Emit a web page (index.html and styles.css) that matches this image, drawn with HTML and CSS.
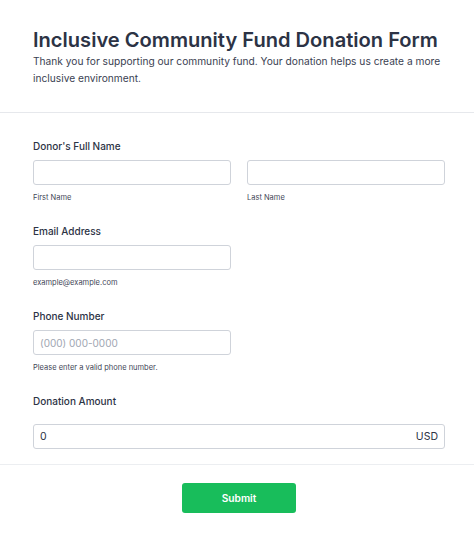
FILE: index.html
```html
<!DOCTYPE html>
<html lang="en">
<head>
    <meta charset="UTF-8">
    <meta name="viewport" content="width=device-width, initial-scale=1.0">
    <title>Inclusive Community Fund Donation Form</title>
    <link rel="stylesheet" href="styles.css">
</head>
<body>
    <form class="form-card">
        <div class="form-header">
            <h1 class="form-title">Inclusive Community Fund Donation Form</h1>
            <p class="form-subtitle">
                Thank you for supporting our community fund. Your donation helps us create a more
                inclusive environment.
            </p>
        </div>

        <div class="form-body">
            <div class="field">
                <label class="field-label">Donor's Full Name</label>
                <div class="field-row">
                    <div class="field-col">
                        <input class="field-input" type="text">
                        <span class="field-sub">First Name</span>
                    </div>
                    <div class="field-col">
                        <input class="field-input" type="text">
                        <span class="field-sub">Last Name</span>
                    </div>
                </div>
            </div>

            <div class="field">
                <label class="field-label">Email Address</label>
                <div class="field-half">
                    <input class="field-input" type="email">
                    <span class="field-sub">example@example.com</span>
                </div>
            </div>

            <div class="field">
                <label class="field-label">Phone Number</label>
                <div class="field-half">
                    <input class="field-input" type="tel" placeholder="(000) 000-0000">
                    <span class="field-sub">Please enter a valid phone number.</span>
                </div>
            </div>

            <div class="field field-amount">
                <label class="field-label">Donation Amount</label>
                <div class="amount-box">
                    <input class="amount-input" type="text" value="0">
                    <span class="amount-currency">USD</span>
                </div>
            </div>
        </div>

        <div class="form-footer">
            <button class="submit-button" type="button">Submit</button>
        </div>
    </form>
</body>
</html>
```

FILE: styles.css
```css
* {
    margin: 0;
    padding: 0;
    box-sizing: border-box;
}

body {
    font-family: Inter, 'Noto Sans', sans-serif;
    background-color: #ffffff;
    color: #2c3345;
}

.form-header {
    padding: 28px 33px 25px;
    border-bottom: 1px solid #e6e8ec;
}

.form-title {
    font-size: 20.1px;
    font-weight: 600;
    line-height: 24px;
}

.form-subtitle {
    font-size: 10.2px;
    line-height: 17px;
    margin-top: 1px;
    color: #3a4152;
}

.form-body {
    padding: 26px 29px 15px 33px;
    border-bottom: 1px solid #eceef1;
}

.field {
    display: flex;
    flex-direction: column;
    margin-bottom: 21px;
}

.field-label {
    font-size: 10px;
    font-weight: 500;
    line-height: 14px;
    margin-bottom: 7px;
}

.field-row {
    display: flex;
    gap: 16px;
}

.field-col {
    flex: 1;
    min-width: 0;
    display: flex;
    flex-direction: column;
}

.field-half {
    width: 198px;
    display: flex;
    flex-direction: column;
}

.field-input {
    width: 100%;
    height: 25px;
    border: 1px solid #cfd3da;
    border-radius: 3px;
    padding: 0 6px;
    font-family: inherit;
    font-size: 10px;
    color: #2c3345;
    outline: none;
}

.field-input::placeholder {
    color: #a0a6b2;
}

.field-sub {
    font-size: 7.5px;
    line-height: 10px;
    margin-top: 8px;
    color: #3f4657;
}

.field-amount {
    margin-bottom: 0;
}

.field-amount .field-label {
    margin-bottom: 16px;
}

.amount-box {
    display: flex;
    align-items: center;
    height: 25px;
    border: 1px solid #cfd3da;
    border-radius: 3px;
    padding: 0 6px;
}

.amount-input {
    flex: 1;
    min-width: 0;
    border: none;
    outline: none;
    font-family: inherit;
    font-size: 10.5px;
    color: #2c3345;
}

.amount-currency {
    font-size: 10.5px;
    color: #2c3345;
}

.form-footer {
    display: flex;
    justify-content: center;
    padding: 18px 29px 0 33px;
}

.submit-button {
    width: 114px;
    height: 30px;
    background-color: #18bd5b;
    color: #ffffff;
    border: none;
    border-radius: 3px;
    font-family: inherit;
    font-size: 10.2px;
    font-weight: 600;
    cursor: pointer;
}
```
